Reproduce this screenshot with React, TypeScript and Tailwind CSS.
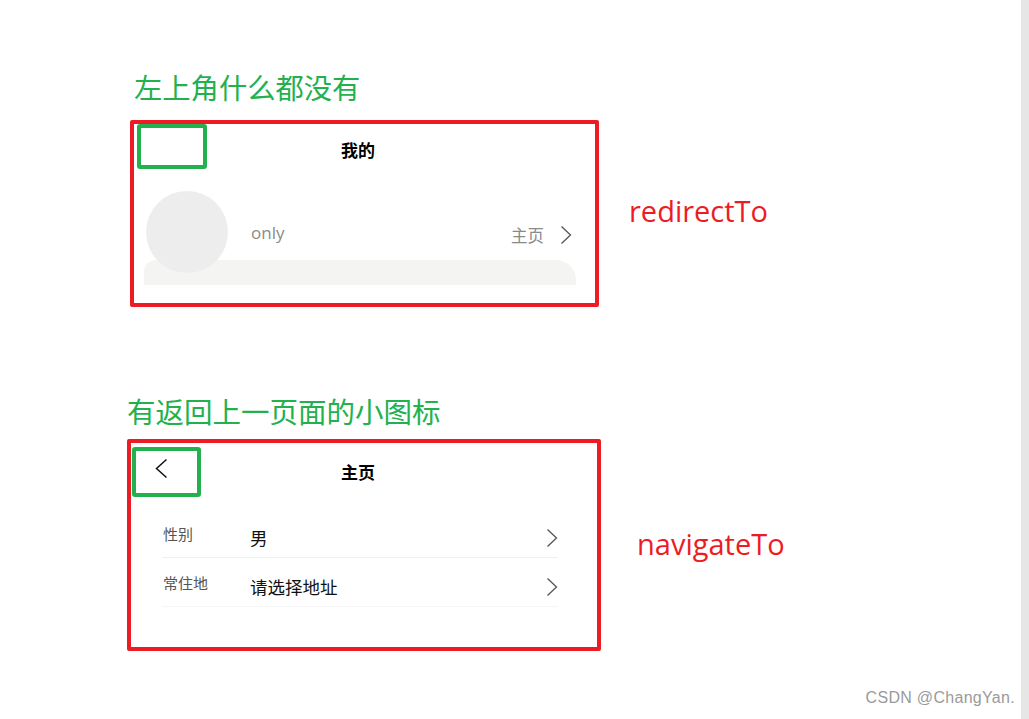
const cjk = "font-['Noto_Sans_CJK_SC',sans-serif]";

function ChevronRight({ className }: { className?: string }) {
  return (
    <svg width="12" height="20" viewBox="0 0 12 20" className={className}>
      <polyline
        points="1.5,1.5 10.5,10 1.5,18.5"
        fill="none"
        stroke="#555"
        strokeWidth="1.3"
      />
    </svg>
  );
}

function ChevronLeft() {
  return (
    <svg width="13" height="21" viewBox="0 0 13 21">
      <polyline
        points="11.5,1.5 1.5,10.5 11.5,19.5"
        fill="none"
        stroke="#111"
        strokeWidth="1.5"
      />
    </svg>
  );
}

// 上面：redirectTo 打开的页面（没有返回按钮）
function MinePage() {
  return (
    <div className="relative w-[469px] h-[187px] border-4 border-[#ed1c24] rounded-[2px] bg-white">
      <div className="absolute left-[3px] top-0 w-[70px] h-[45px] border-4 border-[#22b14c] rounded-[3px]" />
      <div className="ml-[10px] mr-[19px]">
        <div className="h-[51px] flex items-center justify-center">
          <span className={`${cjk} text-[17px] font-bold text-black pr-[4px]`}>我的</span>
        </div>
        <div className="mt-[16px] h-[82px] flex items-center pl-[2px] pr-[4px]">
          <div className="relative z-10 w-[82px] h-[82px] rounded-full bg-[#ededed]" />
          <span className="ml-[23px] mt-[2px] font-['Open_Sans',sans-serif] text-[17px] text-[#8a8a8a]">
            only
          </span>
          <span className={`${cjk} ml-auto mt-[6px] text-[16.5px] text-[#8a8a8a]`}>主页</span>
          <ChevronRight className="ml-[16px] mt-[6px]" />
        </div>
        <div className="-mt-[13px] h-[25px] bg-[#f4f4f2] rounded-t-[20px] rounded-tl-[12px]" />
      </div>
    </div>
  );
}

// 下面：navigateTo 打开的页面（左上角有返回图标）
function HomePage() {
  const rows = [
    { label: "性别", value: "男", line: "border-[#f0f0f0]" },
    { label: "常住地", value: "请选择地址", line: "border-[#f6f6f6]" },
  ];
  return (
    <div className="relative w-[474px] h-[212px] border-4 border-[#ed1c24] rounded-[2px] bg-white">
      <div className="absolute left-[1px] top-[4px] w-[69px] h-[50px] border-4 border-[#22b14c] rounded-[3px]" />
      <div className="h-[58px] flex items-center">
        <div className="w-[50px] pl-[24px] -mt-[7px] flex">
          <ChevronLeft />
        </div>
        <div className={`${cjk} flex-1 text-center text-[17px] font-bold text-black`}>主页</div>
        <div className="w-[62px]" />
      </div>
      <div className="ml-[31px] mr-[39px] mt-[8px]">
        {rows.map((r) => (
          <div key={r.label} className={`h-[49px] pt-[10px] flex items-center border-b ${r.line}`}>
            <span className={`${cjk} w-[88px] pl-[1px] -mt-[7px] text-[15px] text-[#555]`}>
              {r.label}
            </span>
            <span className={`${cjk} text-[17.5px] text-[#111]`}>{r.value}</span>
            <ChevronRight className="ml-auto" />
          </div>
        ))}
      </div>
    </div>
  );
}

export default function App() {
  return (
    <div className="relative w-[1029px] h-[719px] flex bg-white overflow-hidden">
      <div className="flex-1 flex flex-col">
        <div className={`${cjk} ml-[134px] mt-[73px] text-[28.3px] leading-[28px] text-[#22b14c]`}>
          左上角什么都没有
        </div>
        <div className="ml-[130px] mt-[19px] flex items-center">
          <MinePage />
          <span className="ml-[30px] -mt-[6px] font-['Open_Sans',sans-serif] text-[29px] text-[#ed1c24]">
            redirectTo
          </span>
        </div>

        <div className={`${cjk} ml-[127px] mt-[90px] text-[28.5px] leading-[28px] text-[#22b14c]`}>
          有返回上一页面的小图标
        </div>
        <div className="ml-[127px] mt-[14px] flex items-center">
          <HomePage />
          <span className="ml-[36px] -mt-[2px] font-['Open_Sans',sans-serif] text-[29px] text-[#ed1c24]">
            navigateTo
          </span>
        </div>
      </div>
      <div className="w-[8px] bg-[#e6e6e6]" />
      <div className="absolute right-[14px] bottom-[9px] font-['Liberation_Sans',sans-serif] text-[16px] tracking-[0.3px] text-[#9a9a9a]">
        CSDN @ChangYan.
      </div>
    </div>
  );
}
